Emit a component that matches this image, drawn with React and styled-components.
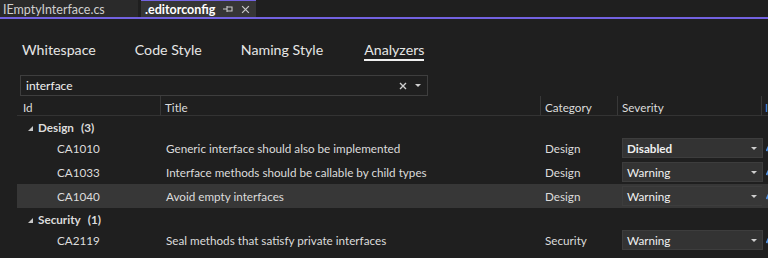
import styled, { createGlobalStyle } from "styled-components";

const GlobalStyle = createGlobalStyle`
  body {
    margin: 0;
    background: #1f1f1f;
    font-family: Lato, "Noto Sans", sans-serif;
    color: #dcdcdc;
    overflow: hidden;
  }
`;

const Window = styled.div`
  width: 768px;
  height: 258px;
  overflow: hidden;
  background: #1f1f1f;
`;

const TabBar = styled.div`
  display: flex;
  height: 17px;
  border-bottom: 2px solid #7262e0;
  background: #1f1f1f;
`;

const DocTab = styled.div`
  display: flex;
  align-items: center;
  gap: 8px;
  box-sizing: border-box;
  width: ${(p) => p.$width}px;
  margin-right: 3px;
  padding: 0 6px 0 ${(p) => (p.$active ? 4 : 3)}px;
  font-size: 12.5px;
  font-weight: ${(p) => (p.$active ? 700 : 400)};
  color: ${(p) => (p.$active ? "#ffffff" : "#cfcfcf")};
  background: ${(p) => (p.$active ? "#363636" : "#2a2a2a")};
  border-top: 1px solid ${(p) => (p.$active ? "#7262e0" : "transparent")};
  white-space: nowrap;
`;

const TabName = styled.span`
  flex: 1;
`;

const TabIcon = styled.svg`
  display: block;
  flex: none;
`;

const Content = styled.div`
  padding-left: 17px;
`;

const NavRow = styled.div`
  display: flex;
  gap: 39px;
  padding: 22px 0 0 5px;
`;

const NavItem = styled.div`
  font-size: 14.2px;
  line-height: 18px;
  color: #e6e6e6;
  margin-left: ${(p) => (p.$active ? 2 : 0)}px;
  border-bottom: 2px solid ${(p) => (p.$active ? "#f0f0f0" : "transparent")};
`;

const SearchBox = styled.div`
  display: flex;
  align-items: center;
  box-sizing: border-box;
  width: 408px;
  height: 21px;
  margin: 14px 0 0 3px;
  padding: 0 6px 0 5px;
  border: 1px solid #3e3e3e;
  font-size: 12px;
  color: #f2f2f2;
`;

const SearchText = styled.span`
  flex: 1;
`;

const ClearIcon = styled.svg`
  display: block;
  margin-right: 8px;
`;

const Caret = styled.span`
  width: 0;
  height: 0;
  border-left: 3px solid transparent;
  border-right: 3px solid transparent;
  border-top: 3px solid #cfcfcf;
`;

const Grid = styled.div`
  display: grid;
  grid-template-columns: 144px 380px 77px 144px 60px;
`;

const HeadCell = styled.div`
  display: flex;
  align-items: center;
  box-sizing: border-box;
  height: 20px;
  padding: 2px 0 0 ${(p) => p.$pad}px;
  font-size: 11.7px;
  color: ${(p) => p.$color || "#dcdcdc"};
  border-bottom: 1px solid #333333;
  border-right: ${(p) => (p.$sep ? "1px solid #383838" : "none")};
  white-space: nowrap;
  overflow: hidden;
`;

const GroupRow = styled.div`
  grid-column: 1 / -1;
  display: flex;
  align-items: center;
  gap: 5px;
  height: 20px;
  padding: 2px 0 0 11px;
  box-sizing: border-box;
  font-size: 11.7px;
  font-weight: 700;
  color: #dcdcdc;
`;

const Tri = styled.span`
  width: 0;
  height: 0;
  border-left: 5px solid transparent;
  border-bottom: 5px solid #c8c8c8;
  margin-top: 2px;
`;

const Count = styled.span`
  margin-left: 2px;
`;

const Cell = styled.div`
  display: flex;
  align-items: center;
  height: 24px;
  padding-left: ${(p) => p.$pad}px;
  font-size: 11.7px;
  color: #dcdcdc;
  background: ${(p) => (p.$selected ? "#373737" : "transparent")};
  white-space: nowrap;
`;

const Select = styled.div`
  display: flex;
  align-items: center;
  flex: none;
  box-sizing: border-box;
  width: 141px;
  height: 20px;
  padding: 0 5px 0 4px;
  background: ${(p) => (p.$selected ? "#373737" : "#333333")};
  border: 1px solid #3d3d3d;
  font-size: 11.7px;
  font-weight: ${(p) => (p.$strong ? 700 : 400)};
  color: #f0f0f0;
`;

const SelectText = styled.span`
  flex: 1;
`;

const EdgeIcon = styled.svg`
  display: block;
  flex: none;
  margin: 0 0 2px 4px;
`;

const rows = [
  { group: "Design", count: 3 },
  { id: "CA1010", title: "Generic interface should also be implemented", cat: "Design", sev: "Disabled" },
  { id: "CA1033", title: "Interface methods should be callable by child types", cat: "Design", sev: "Warning" },
  { id: "CA1040", title: "Avoid empty interfaces", cat: "Design", sev: "Warning", selected: true },
  { group: "Security", count: 1 },
  { id: "CA2119", title: "Seal methods that satisfy private interfaces", cat: "Security", sev: "Warning" },
  { group: "Usage", count: 5 },
];

const Edge = () => (
  <EdgeIcon width="8" height="10" viewBox="0 0 8 10">
    <path d="M0.5 9 L4 1.5 L7.5 9" fill="none" stroke="#4f8fe0" strokeWidth="1.8" />
  </EdgeIcon>
);

export default function App() {
  return (
    <Window>
      <GlobalStyle />
      <TabBar>
        <DocTab $width={138}>
          <TabName>IEmptyInterface.cs</TabName>
        </DocTab>
        <DocTab $width={115} $active>
          <TabName>.editorconfig</TabName>
          <TabIcon width="10" height="8" viewBox="0 0 10 8">
            <path d="M0 4 H4 M4 1 V7 M4 2 H9 V6 H4" fill="none" stroke="#c8c8c8" strokeWidth="1.1" />
          </TabIcon>
          <TabIcon width="9" height="9" viewBox="0 0 8 8">
            <path d="M1 1 L7 7 M7 1 L1 7" stroke="#c8c8c8" strokeWidth="1.1" />
          </TabIcon>
        </DocTab>
      </TabBar>
      <Content>
        <NavRow>
          <NavItem>Whitespace</NavItem>
          <NavItem>Code Style</NavItem>
          <NavItem>Naming Style</NavItem>
          <NavItem $active>Analyzers</NavItem>
        </NavRow>
        <SearchBox>
          <SearchText>interface</SearchText>
          <ClearIcon width="8" height="8" viewBox="0 0 8 8">
            <path d="M1 1 L7 7 M7 1 L1 7" stroke="#cfcfcf" strokeWidth="1.4" />
          </ClearIcon>
          <Caret />
        </SearchBox>
        <Grid>
          <HeadCell $pad={6} $sep>Id</HeadCell>
          <HeadCell $pad={4} $sep>Title</HeadCell>
          <HeadCell $pad={4} $sep>Category</HeadCell>
          <HeadCell $pad={4} $sep>Severity</HeadCell>
          <HeadCell $pad={3} $color="#4f8fe0">I</HeadCell>
          {rows.map((r) =>
            r.group ? (
              <GroupRow key={r.group}>
                <Tri />
                {r.group}
                <Count>({r.count})</Count>
              </GroupRow>
            ) : (
              [
                <Cell key={r.id + "a"} $pad={40} $selected={r.selected}>{r.id}</Cell>,
                <Cell key={r.id + "b"} $pad={5} $selected={r.selected}>{r.title}</Cell>,
                <Cell key={r.id + "c"} $pad={4} $selected={r.selected}>{r.cat}</Cell>,
                <Cell key={r.id + "d"} $pad={4} $selected={r.selected}>
                  <Select $selected={r.selected} $strong={r.sev === "Disabled"}>
                    <SelectText>{r.sev}</SelectText>
                    <Caret />
                  </Select>
                </Cell>,
                <Cell key={r.id + "e"} $pad={0} $selected={r.selected}>
                  <Edge />
                </Cell>,
              ]
            )
          )}
        </Grid>
      </Content>
    </Window>
  );
}
